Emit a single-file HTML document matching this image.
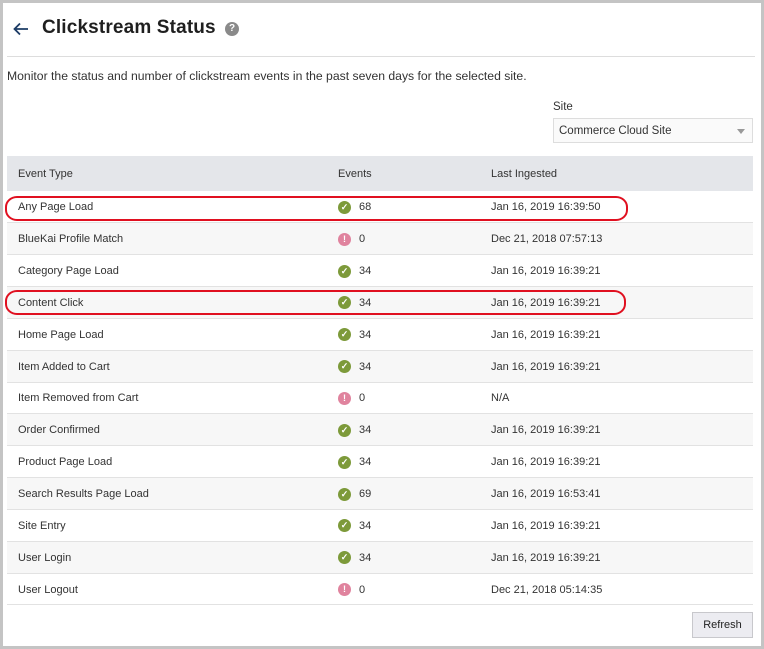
<!DOCTYPE html>
<html><head><style>
*{margin:0;padding:0;box-sizing:border-box}
body{width:764px;height:649px;background:#fff;font-family:"Liberation Sans",sans-serif;font-size:11px;color:#333;position:relative;overflow:hidden}
.frame{position:absolute;inset:0;border:3px solid #c4c4c4}
.title{position:absolute;left:42px;top:17px;font-size:19px;font-weight:bold;color:#1f1f1f;letter-spacing:0.15px}
.arrow{position:absolute;left:13px;top:22px}
.q{position:absolute;left:225px;top:22px;width:14px;height:14px;border-radius:50%;background:#8a8a8a;color:#fff;font-size:10px;font-weight:bold;text-align:center;line-height:14px}
.hr{position:absolute;left:7px;right:9px;top:56px;border-top:1px solid #ddd}
.desc{position:absolute;left:7px;top:69px;font-size:12.2px}
.sitel{position:absolute;left:553px;top:101px;font-size:11.5px}
.sel{position:absolute;left:553px;top:118px;width:200px;height:25px;border:1px solid #ddd;background:#fafafa;padding:6px 5px;font-size:11.5px}
.sel:after{content:"";position:absolute;right:7px;top:10px;border-left:4px solid transparent;border-right:4px solid transparent;border-top:5px solid #999}
table{position:absolute;left:7px;top:156px;width:746px;border-collapse:collapse}
th{background:#e4e6ea;font-weight:normal;text-align:left;height:35px;padding:0}
td{height:31.85px;padding:1px 0 0;border-bottom:1px solid #e2e2e2;vertical-align:middle}
tr:nth-child(odd) td{background:#f7f7f7}
th:first-child,td:first-child{padding-left:11px;width:331px}
td:nth-child(2),th:nth-child(2){width:153px}
.n{display:inline-flex;align-items:center}
.ok,.err{display:inline-block;width:13px;height:13px;border-radius:50%;margin-right:8px;color:#fff;font-size:9px;font-weight:bold;text-align:center;line-height:13px}
.ok{background:#7d9a3a}.err{background:#e0839e}
.oval{position:absolute;border:2px solid #e01020;border-radius:12px/11px}
.btn{position:absolute;left:692px;top:612px;width:61px;height:26px;border:1px solid #c8c8cc;background:#ececf1;text-align:center;line-height:24px;color:#222}
</style></head><body>
<div class="frame"></div>
<svg class="arrow" width="16" height="14" viewBox="0 0 16 14"><path d="M15 7H2M7 1.5L1.5 7L7 12.5" fill="none" stroke="#1d3c66" stroke-width="1.8"/></svg>
<div class="title">Clickstream Status</div>
<div class="q">?</div>
<div class="hr"></div>
<div class="desc">Monitor the status and number of clickstream events in the past seven days for the selected site.</div>
<div class="sitel">Site</div>
<div class="sel">Commerce Cloud Site</div>
<table>
<tr><th>Event Type</th><th>Events</th><th>Last Ingested</th></tr>
<tr><td>Any Page Load</td><td><span class="n"><span class="ok">✓</span>68</span></td><td>Jan 16, 2019 16:39:50</td></tr>
<tr><td>BlueKai Profile Match</td><td><span class="n"><span class="err">!</span>0</span></td><td>Dec 21, 2018 07:57:13</td></tr>
<tr><td>Category Page Load</td><td><span class="n"><span class="ok">✓</span>34</span></td><td>Jan 16, 2019 16:39:21</td></tr>
<tr><td>Content Click</td><td><span class="n"><span class="ok">✓</span>34</span></td><td>Jan 16, 2019 16:39:21</td></tr>
<tr><td>Home Page Load</td><td><span class="n"><span class="ok">✓</span>34</span></td><td>Jan 16, 2019 16:39:21</td></tr>
<tr><td>Item Added to Cart</td><td><span class="n"><span class="ok">✓</span>34</span></td><td>Jan 16, 2019 16:39:21</td></tr>
<tr><td>Item Removed from Cart</td><td><span class="n"><span class="err">!</span>0</span></td><td>N/A</td></tr>
<tr><td>Order Confirmed</td><td><span class="n"><span class="ok">✓</span>34</span></td><td>Jan 16, 2019 16:39:21</td></tr>
<tr><td>Product Page Load</td><td><span class="n"><span class="ok">✓</span>34</span></td><td>Jan 16, 2019 16:39:21</td></tr>
<tr><td>Search Results Page Load</td><td><span class="n"><span class="ok">✓</span>69</span></td><td>Jan 16, 2019 16:53:41</td></tr>
<tr><td>Site Entry</td><td><span class="n"><span class="ok">✓</span>34</span></td><td>Jan 16, 2019 16:39:21</td></tr>
<tr><td>User Login</td><td><span class="n"><span class="ok">✓</span>34</span></td><td>Jan 16, 2019 16:39:21</td></tr>
<tr><td>User Logout</td><td><span class="n"><span class="err">!</span>0</span></td><td>Dec 21, 2018 05:14:35</td></tr>
</table>
<div class="oval" style="left:5px;top:196px;width:623px;height:25px"></div>
<div class="oval" style="left:5px;top:290px;width:621px;height:25px"></div>
<div class="btn">Refresh</div>
</body></html>
